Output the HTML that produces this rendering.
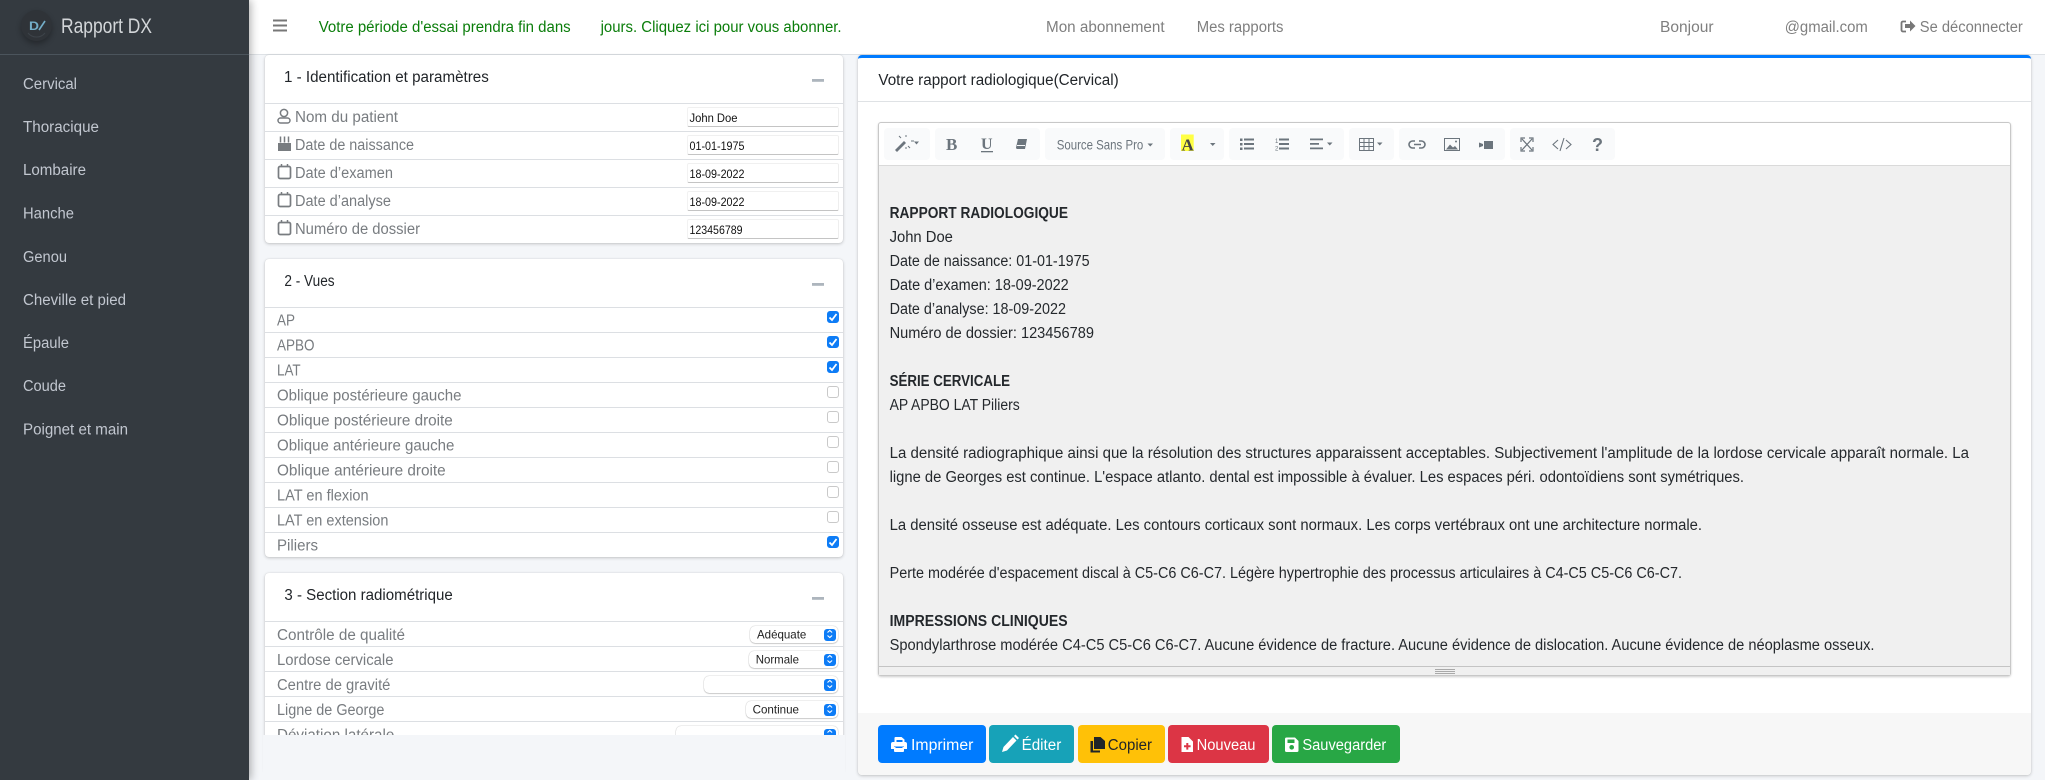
<!DOCTYPE html>
<html lang="fr"><head><meta charset="utf-8"><title>Rapport DX</title>
<style>
html,body{margin:0;padding:0;width:2045px;height:780px;overflow:hidden;background:#f4f6f9;font-family:"Liberation Sans",sans-serif}
.b{position:absolute;box-sizing:border-box}
.card{background:#fff;border-radius:4px;box-shadow:0 0 1px rgba(0,0,0,.13),0 1px 3px rgba(0,0,0,.2)}
.ln{position:absolute;left:265px;width:578px;height:1px;background:#dcdfe3}
.inp{position:absolute;left:687px;width:152px;height:20px;background:#fff;border-bottom:1px solid #c4c4c4;border-top:1px solid #f0f0f0;border-right:1px solid #eee;border-left:1px solid #f2f2f2;box-sizing:border-box;border-radius:2px}
.cb{position:absolute;left:827px;width:12px;height:12px;border-radius:3px;box-sizing:border-box;border:1px solid #c9c9c9;background:#fff}
.cb.on{background:#0d7cf6;border-color:#0d7cf6}
.sel{position:absolute;height:17px;right:1207px;background:#fff;border-radius:5px;box-shadow:0 0 1px rgba(0,0,0,.4),0 1px 1px rgba(0,0,0,.15)}
.sel i{position:absolute;right:2.5px;top:2.5px;width:11.5px;height:12px;background:#0d7cf6;border-radius:3px}
.grp{position:absolute;top:128px;height:32px;background:#f9fafb;border-radius:4px}
.btn{position:absolute;top:725px;height:38px;border-radius:4px}
svg{position:absolute;left:0;top:0}
text{font-family:"Liberation Sans",sans-serif}
.s{font-size:15.5px;fill:#c2c7d0}
.g{font-size:15.5px;fill:#787c80}
.h{font-size:15.5px;fill:#7f7f7f}
.t{font-size:15.5px;fill:#212529}
.e{font-size:15.5px;fill:#24282c}
.eb{font-size:15.5px;fill:#24282c;font-weight:700}
.v{font-size:11.5px;fill:#111}
.o{font-size:12px;fill:#222}
.w{font-size:15.5px;fill:#fff}
</style></head><body>

<!-- main backgrounds -->
<div class="b" style="left:249px;top:0;width:1796px;height:55px;background:#fff;border-bottom:1px solid #dee2e6"></div>

<!-- left cards -->
<div class="b card" style="left:265px;top:55px;width:578px;height:188px"></div>
<div class="b card" style="left:265px;top:259px;width:578px;height:298px"></div>
<div class="b card" style="left:265px;top:573px;width:578px;height:200px"></div>

<div class="ln" style="top:103px"></div><div class="ln" style="top:131px"></div><div class="ln" style="top:159px"></div><div class="ln" style="top:187px"></div><div class="ln" style="top:215px"></div>
<div class="inp" style="top:107px"></div><div class="inp" style="top:135px"></div><div class="inp" style="top:163px"></div><div class="inp" style="top:191px"></div><div class="inp" style="top:219px"></div>

<div class="ln" style="top:307px"></div><div class="ln" style="top:332px"></div><div class="ln" style="top:357px"></div><div class="ln" style="top:382px"></div><div class="ln" style="top:407px"></div><div class="ln" style="top:432px"></div><div class="ln" style="top:457px"></div><div class="ln" style="top:482px"></div><div class="ln" style="top:507px"></div><div class="ln" style="top:532px"></div>
<div class="cb on" style="top:311px"></div><div class="cb on" style="top:336px"></div><div class="cb on" style="top:361px"></div><div class="cb" style="top:386px"></div><div class="cb" style="top:411px"></div><div class="cb" style="top:436px"></div><div class="cb" style="top:461px"></div><div class="cb" style="top:486px"></div><div class="cb" style="top:511px"></div><div class="cb on" style="top:536px"></div>

<div class="ln" style="top:621px"></div><div class="ln" style="top:646px"></div><div class="ln" style="top:671px"></div><div class="ln" style="top:696px"></div><div class="ln" style="top:721px"></div>
<div class="sel" style="top:626px;width:88.5px"><i></i></div>
<div class="sel" style="top:651px;width:89.5px"><i></i></div>
<div class="sel" style="top:676px;width:134.5px"><i></i></div>
<div class="sel" style="top:701px;width:92.5px"><i></i></div>
<div class="sel" style="top:726px;width:162.5px"><i></i></div>

<!-- right card -->
<div class="b card" style="left:858px;top:55px;width:1173px;height:720px;border-top:3px solid #007bff"></div>
<div class="b" style="left:858px;top:101px;width:1173px;height:1px;background:#dfe2e5"></div>
<div class="b" style="left:858px;top:713px;width:1173px;height:62px;background:#f7f7f7;border-radius:0 0 4px 4px"></div>
<!-- editor -->
<div class="b" style="left:878px;top:122px;width:1133px;height:554px;background:#fff;border:1px solid #c8c8c8;border-radius:3px;box-shadow:0 1px 2px rgba(0,0,0,.2)"></div>
<div class="b" style="left:879px;top:165px;width:1131px;height:1px;background:#dadada"></div>
<div class="b" style="left:879px;top:166px;width:1131px;height:500px;background:#f0f0f0"></div>
<div class="b" style="left:879px;top:666px;width:1131px;height:9px;background:#f0f0f0;border-top:1px solid #c4c4c4"></div>
<div class="grp" style="left:884px;width:46px"></div>
<div class="grp" style="left:935px;width:105px"></div>
<div class="grp" style="left:1045px;width:120px"></div>
<div class="grp" style="left:1170px;width:54px"></div>
<div class="grp" style="left:1229px;width:115px"></div>
<div class="grp" style="left:1349px;width:45px"></div>
<div class="grp" style="left:1399px;width:106px"></div>
<div class="grp" style="left:1510px;width:105px"></div>
<!-- buttons -->
<div class="btn" style="left:878px;width:108px;background:#007bff"></div>
<div class="btn" style="left:989px;width:85px;background:#17a2b8"></div>
<div class="btn" style="left:1078px;width:87px;background:#ffc107"></div>
<div class="btn" style="left:1168px;width:101px;background:#dc3545"></div>
<div class="btn" style="left:1272px;width:128px;background:#28a745"></div>

<!-- sidebar -->
<div class="b" style="left:0;top:0;width:249px;height:780px;background:#343a40;box-shadow:2px 0 8px rgba(0,0,0,.3)"></div>
<div class="b" style="left:0;top:54px;width:249px;height:1px;background:#4b545c"></div>
<div class="b" style="left:21px;top:10px;width:31px;height:31px;border-radius:50%;background:#2f3338;box-shadow:0 3px 6px rgba(0,0,0,.3)"></div>

<svg width="2045" height="780" viewBox="0 0 2045 780" xmlns="http://www.w3.org/2000/svg">
<!-- logo -->
<text x="29" y="30" font-size="12" font-weight="700" fill="#74aec9" textLength="10" lengthAdjust="spacingAndGlyphs">D</text>
<path d="M39 30L45 21" stroke="#74aec9" stroke-width="1.6" fill="none"/>
<path d="M28 33a11 11 0 0 0 17 0" stroke="#3d4349" stroke-width="1" fill="none"/>
<text x="61" y="33" font-size="21" fill="#d3d6d9" textLength="91" lengthAdjust="spacingAndGlyphs">Rapport DX</text>
<!-- sidebar menu -->
<g class="m">
<text class="s" x="23" y="89" textLength="54" lengthAdjust="spacingAndGlyphs">Cervical</text>
<text class="s" x="23" y="132" textLength="76" lengthAdjust="spacingAndGlyphs">Thoracique</text>
<text class="s" x="23" y="175" textLength="63" lengthAdjust="spacingAndGlyphs">Lombaire</text>
<text class="s" x="23" y="218.500" textLength="51" lengthAdjust="spacingAndGlyphs">Hanche</text>
<text class="s" x="23" y="262" textLength="44" lengthAdjust="spacingAndGlyphs">Genou</text>
<text class="s" x="23" y="305" textLength="103" lengthAdjust="spacingAndGlyphs">Cheville et pied</text>
<text class="s" x="23" y="348" textLength="46" lengthAdjust="spacingAndGlyphs">Épaule</text>
<text class="s" x="23" y="391" textLength="43" lengthAdjust="spacingAndGlyphs">Coude</text>
<text class="s" x="23" y="434.500" textLength="105" lengthAdjust="spacingAndGlyphs">Poignet et main</text>
</g>
<!-- header -->
<path d="M273 20.500h14M273 25.500h14M273 30.500h14" stroke="#777" stroke-width="2"/>
<text x="318.700" y="32" font-size="15.500" fill="#0a7d0a" textLength="252" lengthAdjust="spacingAndGlyphs">Votre période d'essai prendra fin dans</text>
<text x="600.600" y="32" font-size="15.500" fill="#0a7d0a" textLength="241" lengthAdjust="spacingAndGlyphs">jours. Cliquez ici pour vous abonner.</text>
<text class="h" x="1046" y="32" textLength="118.600" lengthAdjust="spacingAndGlyphs">Mon abonnement</text>
<text class="h" x="1196.700" y="32" textLength="86.800" lengthAdjust="spacingAndGlyphs">Mes rapports</text>
<text class="h" x="1660" y="32" textLength="53.600" lengthAdjust="spacingAndGlyphs">Bonjour</text>
<text class="h" x="1784.800" y="32" textLength="83" lengthAdjust="spacingAndGlyphs">@gmail.com</text>
<path d="M1906 21.500h-3a1.500 1.500 0 0 0-1.500 1.500v7a1.500 1.500 0 0 0 1.500 1.500h3" stroke="#777" stroke-width="1.800" fill="none"/>
<path d="M1905 24h5v-3.500l5.500 5.500-5.500 5.500v-3.500h-5z" fill="#777"/>
<text class="h" x="1919.800" y="32" textLength="103" lengthAdjust="spacingAndGlyphs">Se déconnecter</text>

<!-- card 1 -->
<text class="t" x="284" y="82" textLength="204.800" lengthAdjust="spacingAndGlyphs">1 - Identification et paramètres</text>
<rect x="812" y="79" width="12" height="2.800" fill="#adb5bd"/>
<g fill="none" stroke="#787c80" stroke-width="1.500">
<circle cx="284" cy="113" r="3.600"/>
<rect x="278" y="118" width="12" height="5" rx="2.500"/>
<path d="M278 151h13v-5h-13zM278 146h13v-3h-13z" fill="#787c80" stroke="none"/>
<path d="M280.500 136.500v6M284.500 136.500v6M288.500 136.500v6"/>
<rect x="278.500" y="166.500" width="12" height="12" rx="1.500" stroke-width="1.700"/><path d="M281.500 164v3M287.500 164v3"/>
<rect x="278.500" y="194.500" width="12" height="12" rx="1.500" stroke-width="1.700"/><path d="M281.500 192v3M287.500 192v3"/>
<rect x="278.500" y="222.500" width="12" height="12" rx="1.500" stroke-width="1.700"/><path d="M281.500 220v3M287.500 220v3"/>
</g>
<text class="g" x="295" y="122" textLength="103" lengthAdjust="spacingAndGlyphs">Nom du patient</text>
<text class="g" x="295" y="150" textLength="119" lengthAdjust="spacingAndGlyphs">Date de naissance</text>
<text class="g" x="295" y="178" textLength="98" lengthAdjust="spacingAndGlyphs">Date d’examen</text>
<text class="g" x="295" y="206" textLength="96" lengthAdjust="spacingAndGlyphs">Date d’analyse</text>
<text class="g" x="295" y="234" textLength="125" lengthAdjust="spacingAndGlyphs">Numéro de dossier</text>
<text class="v" x="689.500" y="122" textLength="48" lengthAdjust="spacingAndGlyphs">John Doe</text>
<text class="v" x="689.500" y="150" textLength="55" lengthAdjust="spacingAndGlyphs">01-01-1975</text>
<text class="v" x="689.500" y="178" textLength="55" lengthAdjust="spacingAndGlyphs">18-09-2022</text>
<text class="v" x="689.500" y="206" textLength="55" lengthAdjust="spacingAndGlyphs">18-09-2022</text>
<text class="v" x="689.500" y="234" textLength="53" lengthAdjust="spacingAndGlyphs">123456789</text>

<!-- card 2 -->
<text class="t" x="284.400" y="286" textLength="50.200" lengthAdjust="spacingAndGlyphs">2 - Vues</text>
<rect x="812" y="283" width="12" height="2.800" fill="#adb5bd"/>
<text class="g" x="277" y="325.500" textLength="18" lengthAdjust="spacingAndGlyphs">AP</text>
<text class="g" x="277" y="350.500" textLength="37.500" lengthAdjust="spacingAndGlyphs">APBO</text>
<text class="g" x="277" y="375.500" textLength="23.600" lengthAdjust="spacingAndGlyphs">LAT</text>
<text class="g" x="277" y="400.500" textLength="184.500" lengthAdjust="spacingAndGlyphs">Oblique postérieure gauche</text>
<text class="g" x="277" y="425.500" textLength="175.800" lengthAdjust="spacingAndGlyphs">Oblique postérieure droite</text>
<text class="g" x="277" y="450.500" textLength="177.400" lengthAdjust="spacingAndGlyphs">Oblique antérieure gauche</text>
<text class="g" x="277" y="475.500" textLength="168.700" lengthAdjust="spacingAndGlyphs">Oblique antérieure droite</text>
<text class="g" x="277" y="500.500" textLength="91.600" lengthAdjust="spacingAndGlyphs">LAT en flexion</text>
<text class="g" x="277" y="525.500" textLength="111.400" lengthAdjust="spacingAndGlyphs">LAT en extension</text>
<text class="g" x="277" y="550.500" textLength="41" lengthAdjust="spacingAndGlyphs">Piliers</text>
<g fill="none" stroke="#fff" stroke-width="1.800">
<path d="M829.500 317.500l2.500 2.500 4.500-6"/><path d="M829.500 342.500l2.500 2.500 4.500-6"/><path d="M829.500 367.500l2.500 2.500 4.500-6"/><path d="M829.500 542.500l2.500 2.500 4.500-6"/>
</g>

<!-- card 3 -->
<text class="t" x="284.400" y="600" textLength="168.400" lengthAdjust="spacingAndGlyphs">3 - Section radiométrique</text>
<rect x="812" y="597" width="12" height="2.800" fill="#adb5bd"/>
<text class="g" x="277" y="640" textLength="128" lengthAdjust="spacingAndGlyphs">Contrôle de qualité</text>
<text class="g" x="277" y="665" textLength="116.500" lengthAdjust="spacingAndGlyphs">Lordose cervicale</text>
<text class="g" x="277" y="690" textLength="113.400" lengthAdjust="spacingAndGlyphs">Centre de gravité</text>
<text class="g" x="277" y="715" textLength="107.400" lengthAdjust="spacingAndGlyphs">Ligne de George</text>
<text class="g" x="277" y="740" textLength="117.300" lengthAdjust="spacingAndGlyphs">Déviation latérale</text>
<text class="o" x="757" y="638.500" textLength="49.300" lengthAdjust="spacingAndGlyphs">Adéquate</text>
<text class="o" x="755.700" y="663.500" textLength="43.300" lengthAdjust="spacingAndGlyphs">Normale</text>
<text class="o" x="752.600" y="713.500" textLength="46.400" lengthAdjust="spacingAndGlyphs">Continue</text>
<g fill="none" stroke="#fff" stroke-width="1.100">
<path d="M827.500 632.500l2.300-2 2.300 2M827.500 635.500l2.300 2 2.300-2"/>
<path d="M827.500 657.500l2.300-2 2.300 2M827.500 660.500l2.300 2 2.300-2"/>
<path d="M827.500 682.500l2.300-2 2.300 2M827.500 685.500l2.300 2 2.300-2"/>
<path d="M827.500 707.500l2.300-2 2.300 2M827.500 710.500l2.300 2 2.300-2"/>
<path d="M827.500 732.500l2.300-2 2.300 2"/>
</g>

<!-- right title -->
<text class="t" x="878.400" y="85" textLength="240.300" lengthAdjust="spacingAndGlyphs">Votre rapport radiologique(Cervical)</text>

<!-- toolbar -->
<g fill="#6c757d" stroke="none">
<!-- magic -->
<path d="M895 150l9-9 2 2-9 9z"/>
<path d="M906 137v-2M911 141h3M908 146l2 2M901 138l-2-2M906 147v2" stroke="#6c757d" stroke-width="1" fill="none"/>
<path d="M914 141.500h5l-2.500 3z"/>
<text x="946" y="150" font-size="17" font-weight="700" style="font-family:'Liberation Serif',serif">B</text>
<text x="981" y="149" font-size="16" font-weight="700" style="font-family:'Liberation Serif',serif">U</text>
<rect x="981" y="151" width="12" height="1.300"/>
<path d="M1018 139h9l-2 10h-8a1.500 1.500 0 0 1-1-1.500z"/>
<rect x="1017" y="145" width="8" height="1" fill="#f8f9fa"/>
<text x="1056.700" y="149.500" font-size="14" textLength="86.600" lengthAdjust="spacingAndGlyphs">Source Sans Pro</text>
<path d="M1147.500 143.500h5.500l-2.750 3z"/>
<rect x="1181" y="134.500" width="12.700" height="16.500" fill="#ffff44"/>
<text x="1181.500" y="150.500" font-size="17" font-weight="700" fill="#444" style="font-family:'Liberation Serif',serif">A</text>
<path d="M1210 143h5.500l-2.750 3z"/>
<!-- ul -->
<path d="M1240 138.500h2.500v2.500h-2.500zM1240 143h2.500v2.500h-2.500zM1240 147.500h2.500v2.500h-2.500zM1244 138.500h10v2h-10zM1244 143h10v2h-10zM1244 147.500h10v2h-10z"/>
<!-- ol -->
<text x="1275" y="143" font-size="6">1</text><text x="1275" y="150.500" font-size="6">2</text>
<path d="M1279 138.500h10v2h-10zM1279 143h10v2h-10zM1279 147.500h10v2h-10z"/>
<!-- align -->
<path d="M1310 138.500h13v1.800h-13zM1310 143h9v1.800h-9zM1310 147.500h13v1.800h-13z"/>
<path d="M1327 142.500h5.500l-2.750 3z"/>
<!-- table -->
<path d="M1359.500 138.500h14v12h-14zM1359.500 142.500h14M1359.500 146.500h14M1364 138.500v12M1369 138.500v12" fill="none" stroke="#6c757d" stroke-width="1"/>
<path d="M1377 142.500h5.500l-2.750 3z"/>
<!-- link -->
<path d="M1415 141h-2.500a3.500 3.500 0 0 0 0 7h2.500M1419 141h2.500a3.500 3.500 0 0 1 0 7h-2.500M1414 144.500h7" fill="none" stroke="#6c757d" stroke-width="1.600"/>
<!-- image -->
<rect x="1444.500" y="138.500" width="15" height="12" fill="none" stroke="#6c757d" stroke-width="1"/>
<path d="M1446 149.500l4-5 3 3 2-1.500 3 3.500z"/><circle cx="1456" cy="141.500" r="1"/>
<!-- video -->
<path d="M1484 141h9v8h-9zM1479 142.500l4 1.500v2l-4 1.500z"/>
<!-- fullscreen -->
<path d="M1522 139l10 11M1532 139l-10 11M1521 142v-4h4M1533 142v-4h-4M1521 147v4h4M1533 147v4h-4" fill="none" stroke="#6c757d" stroke-width="1.200"/>
<!-- code -->
<path d="M1558 140l-5 4.500 5 4.500M1566 140l5 4.500-5 4.500M1564 138l-4 13" fill="none" stroke="#6c757d" stroke-width="1.100"/>
<text x="1592" y="151" font-size="18" font-weight="700">?</text>
</g>

<!-- editor text -->
<text class="eb" x="889.600" y="218" textLength="178.400" lengthAdjust="spacingAndGlyphs">RAPPORT RADIOLOGIQUE</text>
<text class="e" x="889.600" y="242" textLength="63.300" lengthAdjust="spacingAndGlyphs">John Doe</text>
<text class="e" x="889.600" y="266" textLength="200" lengthAdjust="spacingAndGlyphs">Date de naissance: 01-01-1975</text>
<text class="e" x="889.600" y="290" textLength="179.100" lengthAdjust="spacingAndGlyphs">Date d’examen: 18-09-2022</text>
<text class="e" x="889.600" y="314" textLength="176.400" lengthAdjust="spacingAndGlyphs">Date d’analyse: 18-09-2022</text>
<text class="e" x="889.600" y="338" textLength="204.400" lengthAdjust="spacingAndGlyphs">Numéro de dossier: 123456789</text>
<text class="eb" x="889.600" y="386" textLength="120.400" lengthAdjust="spacingAndGlyphs">SÉRIE CERVICALE</text>
<text class="e" x="889.600" y="410" textLength="130.100" lengthAdjust="spacingAndGlyphs">AP APBO LAT Piliers</text>
<text class="e" x="889.600" y="458" textLength="1079.400" lengthAdjust="spacingAndGlyphs">La densité radiographique ainsi que la résolution des structures apparaissent acceptables. Subjectivement l'amplitude de la lordose cervicale apparaît normale. La</text>
<text class="e" x="889.600" y="482" textLength="854.400" lengthAdjust="spacingAndGlyphs">ligne de Georges est continue. L'espace atlanto. dental est impossible à évaluer. Les espaces péri. odontoïdiens sont symétriques.</text>
<text class="e" x="889.600" y="530" textLength="812.400" lengthAdjust="spacingAndGlyphs">La densité osseuse est adéquate. Les contours corticaux sont normaux. Les corps vertébraux ont une architecture normale.</text>
<text class="e" x="889.600" y="578" textLength="792.400" lengthAdjust="spacingAndGlyphs">Perte modérée d'espacement discal à C5-C6 C6-C7. Légère hypertrophie des processus articulaires à C4-C5 C5-C6 C6-C7.</text>
<text class="eb" x="889.600" y="626" textLength="178" lengthAdjust="spacingAndGlyphs">IMPRESSIONS CLINIQUES</text>
<text class="e" x="889.600" y="650" textLength="984.900" lengthAdjust="spacingAndGlyphs">Spondylarthrose modérée C4-C5 C5-C6 C6-C7. Aucune évidence de fracture. Aucune évidence de dislocation. Aucune évidence de néoplasme osseux.</text>
<path d="M1435 669.500h20M1435 671.500h20M1435 673.500h20" stroke="#a9a9a9" stroke-width="1"/>

<!-- buttons -->
<path d="M894.500 742v-4a1 1 0 0 1 1-1h6l3 2.500v2.500h-2v-2h-6v2z" fill="#fff"/>
<path d="M893 742h12a2 2 0 0 1 2 2v5h-3v-2.500h-10v2.500h-3v-5a2 2 0 0 1 2-2z" fill="#fff"/>
<path d="M895.500 748h7v2.500h-7zM894 747v4a1 1 0 0 0 1 1h8a1 1 0 0 0 1-1v-4h-1.500v3.500h-7v-3.500z" fill="#fff"/>
<text class="w" x="911" y="750" textLength="62.400" lengthAdjust="spacingAndGlyphs">Imprimer</text>
<path d="M1002 752l1.500-5 9.500-10 3.500 3.500-9.500 10zM1014 736l1.500-1.500 3.500 3.500-1.500 1.500z" fill="#fff"/>
<text class="w" x="1021.600" y="750" textLength="39.700" lengthAdjust="spacingAndGlyphs">Éditer</text>
<path d="M1094 737h6.500l4.500 4v8h-11zM1090.500 741h2.500v9.500h7v2h-9.500z" fill="#212529"/>
<text x="1107.800" y="750" font-size="15.500" fill="#212529" textLength="44.200" lengthAdjust="spacingAndGlyphs">Copier</text>
<path d="M1181.500 737h7l4.500 4.500v10.500h-11.500zM1186.300 743v2.300h-2.300v2h2.300v2.300h2v-2.300h2.300v-2h-2.300v-2.300z" fill="#fff" fill-rule="evenodd"/>
<text class="w" x="1196.600" y="750" textLength="58.900" lengthAdjust="spacingAndGlyphs">Nouveau</text>
<path d="M1285 739a1.500 1.500 0 0 1 1.500-1.500h8.500l3.500 3.500v9.500a1.500 1.500 0 0 1-1.500 1.500h-10.500a1.500 1.500 0 0 1-1.500-1.500zM1287.500 739.500v3.500h7v-3.500zM1291.700 745a2.300 2.300 0 1 0 .01 0z" fill="#fff" fill-rule="evenodd"/>
<text class="w" x="1302.400" y="750" textLength="83.900" lengthAdjust="spacingAndGlyphs">Sauvegarder</text>
</svg>

<!-- clip of the left scrolling column -->
<div class="b" style="left:263px;top:735px;width:582px;height:45px;background:#f4f6f9"></div>
</body></html>
